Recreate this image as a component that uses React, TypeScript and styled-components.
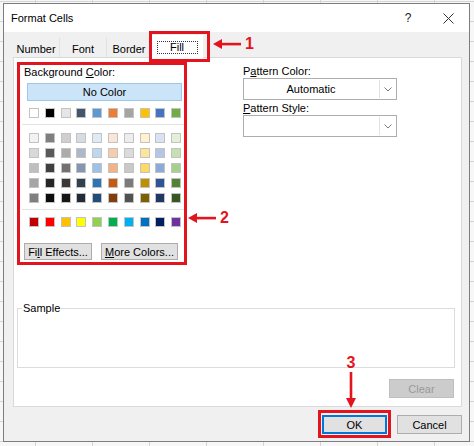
import React from 'react'
import styled, { createGlobalStyle } from 'styled-components'

const RED = '#e2141d'

const GlobalStyle = createGlobalStyle`
  html, body {
    margin: 0;
    padding: 0;
  }
  body {
    font-family: "Liberation Sans", Arial, sans-serif;
    font-size: 10.5px;
    color: #000000;
  }
`

const THEME = ['#FFFFFF', '#000000', '#E7E6E6', '#44546A', '#5B9BD5', '#ED7D31', '#A5A5A5', '#FFC000', '#4472C4', '#70AD47']

const TINTS = [
  ['#F2F2F2', '#7F7F7F', '#D0CECE', '#D6DCE4', '#DEEBF6', '#FBE5D5', '#EDEDED', '#FFF2CC', '#D9E2F3', '#E2EFD9'],
  ['#D8D8D8', '#595959', '#AEABAB', '#ADB9CA', '#BDD7EE', '#F7CBAC', '#DBDBDB', '#FEE599', '#B4C6E7', '#C5E0B3'],
  ['#BFBFBF', '#3F3F3F', '#757070', '#8496B0', '#9CC3E5', '#F4B183', '#C9C9C9', '#FFD965', '#8EAADB', '#A8D08D'],
  ['#A5A5A5', '#262626', '#3A3838', '#323F4F', '#2E75B5', '#C55A11', '#7B7B7B', '#BF9000', '#2F5496', '#538135'],
  ['#7F7F7F', '#0C0C0C', '#171616', '#222A35', '#1E4E79', '#833C0B', '#525252', '#7F6000', '#1F3864', '#375623'],
]

const STANDARD = ['#C00000', '#FF0000', '#FFC000', '#FFFF00', '#92D050', '#00B050', '#00B0F0', '#0070C0', '#002060', '#7030A0']

const Screen = styled.div`
  width: 474px;
  height: 446px;
  box-sizing: border-box;
  padding: 3px 4px 4px 3px;
  background-color: #f7f7f7;
  background-image: linear-gradient(#d4d4d4 1px, transparent 1px),
    linear-gradient(90deg, #d4d4d4 1px, transparent 1px);
  background-size: 57px 20px;
  background-position: 35px 1px;
  overflow: hidden;
`

const Dialog = styled.div`
  position: relative;
  width: 467px;
  height: 439px;
  box-sizing: border-box;
  border: 1px solid #7d7d7d;
  background: #f0f0f0;
  display: flex;
  flex-direction: column;
`

const TitleBar = styled.div`
  height: 28px;
  background: #ffffff;
  display: flex;
  align-items: center;
  padding: 0 6px 0 7px;
  font-size: 11px;
`

const Title = styled.div`
  flex: 1;
`

const Controls = styled.div`
  display: flex;
  gap: 10px;
`

const ControlButton = styled.div`
  width: 30px;
  height: 28px;
  display: flex;
  align-items: center;
  justify-content: center;
  font-size: 12px;
  color: #222;
`

const Body = styled.div`
  flex: 1;
  display: flex;
  flex-direction: column;
  padding: 0 7px 0 9px;
`

const TabStrip = styled.div`
  height: 25px;
  display: flex;
  align-items: flex-end;
`

const Tab = styled.div<{ $w: number; $active?: boolean }>`
  position: relative;
  width: ${({ $w }) => $w}px;
  height: ${({ $active }) => ($active ? 23 : 20)}px;
  margin-bottom: ${({ $active }) => ($active ? -1 : 0)}px;
  box-sizing: border-box;
  display: flex;
  align-items: center;
  justify-content: center;
  padding-top: ${({ $active }) => ($active ? 1 : 3)}px;
  background: ${({ $active }) => ($active ? '#ffffff' : '#f0f0f0')};
  border-right: 1px solid ${({ $active }) => ($active ? 'transparent' : '#e2e2e2')};
  z-index: ${({ $active }) => ($active ? 1 : 0)};
  font-size: 11px;

  ${({ $active }) =>
    $active &&
    `
    &::after {
      content: '';
      position: absolute;
      inset: -4px -8px -4px -3px;
      border: 3px solid ${RED};
    }
  `}
`

const FocusLabel = styled.span`
  width: 41px;
  height: 13px;
  box-sizing: border-box;
  border: 1px dotted #333;
  display: flex;
  align-items: center;
  justify-content: center;
`

const Panel = styled.div`
  height: 350px;
  box-sizing: border-box;
  background: #ffffff;
  border: 1px solid #d9d9d9;
  padding: 4px 6px 0 3px;
  display: flex;
  flex-direction: column;
`

const TopRow = styled.div`
  display: flex;
`

const ColorGroup = styled.div<{ $highlight?: boolean }>`
  width: 170px;
  height: 203px;
  box-sizing: border-box;
  border: 3px solid ${({ $highlight }) => ($highlight ? RED : 'transparent')};
  padding: 1px 2px 0 4px;
  display: flex;
  flex-direction: column;
`

const Label = styled.div`
  height: 13px;
  line-height: 13px;
  font-size: 11px;
  white-space: nowrap;
`

const Key = styled.span`
  text-decoration: underline;
  text-underline-offset: 1px;
`

const NoColorButton = styled.div`
  margin: 4px 0 0 3px;
  width: 155px;
  height: 18px;
  box-sizing: border-box;
  background: #cce4f7;
  border: 1px solid #9cc8eb;
  display: flex;
  align-items: center;
  justify-content: center;
  font-size: 11px;
`

const SwatchGrid = styled.div<{ $top: number }>`
  margin: ${({ $top }) => $top}px 0 0 5px;
  display: grid;
  grid-template-columns: repeat(10, 10px);
  column-gap: 5.8px;
  row-gap: 5px;
`

const Swatch = styled.div<{ $color: string }>`
  width: 10px;
  height: 10px;
  box-sizing: border-box;
  background: ${({ $color }) => $color};
  border: 1px solid #c3c3c3;
`

const Divider = styled.div<{ $top: number }>`
  margin: ${({ $top }) => $top}px -2px 0 -2px;
  height: 1px;
  background: #e3e3e3;
`

const ButtonRow = styled.div`
  margin-top: 16px;
  display: flex;
  gap: 9px;
`

const Button = styled.div<{ $w: number; $h?: number; $primary?: boolean; $disabled?: boolean; $highlight?: boolean }>`
  position: relative;
  width: ${({ $w }) => $w}px;
  height: ${({ $h }) => $h ?? 17}px;
  box-sizing: border-box;
  display: flex;
  align-items: center;
  justify-content: center;
  background: ${({ $disabled }) => ($disabled ? '#cccccc' : '#e1e1e1')};
  border: 1px solid ${({ $primary, $disabled }) => ($primary ? '#0078d7' : $disabled ? '#bfbfbf' : '#adadad')};
  box-shadow: ${({ $primary }) => ($primary ? 'inset 0 0 0 1px #0078d7' : 'none')};
  color: ${({ $disabled }) => ($disabled ? '#9a9a9a' : '#000000')};
  font-size: 11px;

  ${({ $highlight }) =>
    $highlight &&
    `
    &::after {
      content: '';
      position: absolute;
      inset: -6px -5px -5px -5px;
      border: 3px solid ${RED};
    }
  `}
`

const PatternColumn = styled.div`
  margin-left: 56px;
  width: 154px;
  padding-top: 3px;
  display: flex;
  flex-direction: column;
`

const Select = styled.div`
  height: 22px;
  box-sizing: border-box;
  border: 1px solid #adadad;
  background: #ffffff;
  display: flex;
`

const SelectValue = styled.div`
  flex: 1;
  display: flex;
  align-items: center;
  justify-content: center;
  font-size: 11px;
`

const Chevron = styled.div`
  width: 16px;
  margin: 1px;
  box-sizing: border-box;
  border-left: 1px solid #e1e1e1;
  display: flex;
  align-items: center;
  justify-content: center;
`

const LabelGap = styled.div`
  height: 2px;
`

const Sample = styled.fieldset`
  margin: 37px 0 0 0;
  height: 66px;
  box-sizing: border-box;
  padding: 0 0 0 4px;
  border: 1px solid #dcdcdc;
`

const Legend = styled.legend`
  padding: 0 1px;
  font-size: 11px;
  line-height: 13px;
`

const ClearRow = styled.div`
  margin-top: 11px;
  display: flex;
  justify-content: flex-end;
  padding-right: 1px;
`

const Footer = styled.div`
  margin-top: 8px;
  display: flex;
  justify-content: flex-end;
  gap: 10px;
`

const Callout = styled.div<{ $left: number; $top: number; $column?: boolean }>`
  position: absolute;
  left: ${({ $left }) => $left}px;
  top: ${({ $top }) => $top}px;
  display: flex;
  flex-direction: ${({ $column }) => ($column ? 'column' : 'row')};
  align-items: center;
  gap: ${({ $column }) => ($column ? 1 : 4)}px;
`

const CalloutNumber = styled.span`
  font-family: "Liberation Sans", Arial, sans-serif;
  font-weight: bold;
  font-size: 16px;
  line-height: 16px;
  color: ${RED};
`

const LeftArrow = () => (
  <svg width="28" height="12" viewBox="0 0 28 12">
    <polygon points="0,6 9,1 9,11" fill={RED} />
    <rect x="8" y="4.8" width="20" height="2.6" fill={RED} />
  </svg>
)

const DownArrow = () => (
  <svg width="12" height="36" viewBox="0 0 12 36">
    <rect x="4.7" y="0" width="2.6" height="28" fill={RED} />
    <polygon points="6,36 1,26 11,26" fill={RED} />
  </svg>
)

const CloseIcon = () => (
  <svg width="11" height="11" viewBox="0 0 11 11">
    <path d="M0.5 0.5 L10.5 10.5 M10.5 0.5 L0.5 10.5" stroke="#333" strokeWidth="1" fill="none" />
  </svg>
)

const ChevronIcon = () => (
  <svg width="8" height="5" viewBox="0 0 8 5">
    <path d="M0.5 0.5 L4 4 L7.5 0.5" stroke="#7a7a7a" strokeWidth="1" fill="none" />
  </svg>
)

const App: React.FC = () => {
  return (
    <>
      <GlobalStyle />
      <Screen>
        <Dialog>
          <TitleBar>
            <Title>Format Cells</Title>
            <Controls>
              <ControlButton>?</ControlButton>
              <ControlButton>
                <CloseIcon />
              </ControlButton>
            </Controls>
          </TitleBar>

          <Body>
            <TabStrip>
              <Tab $w={47}>Number</Tab>
              <Tab $w={47}>Font</Tab>
              <Tab $w={45}>Border</Tab>
              <Tab $w={51} $active>
                <FocusLabel>Fill</FocusLabel>
              </Tab>
            </TabStrip>

            <Panel>
              <TopRow>
                <ColorGroup $highlight>
                  <Label>
                    Background <Key>C</Key>olor:
                  </Label>
                  <NoColorButton>No Color</NoColorButton>
                  <SwatchGrid $top={7}>
                    {THEME.map((c) => (
                      <Swatch key={c} $color={c} />
                    ))}
                  </SwatchGrid>
                  <Divider $top={6} />
                  <SwatchGrid $top={8}>
                    {TINTS.flat().map((c, i) => (
                      <Swatch key={i} $color={c} />
                    ))}
                  </SwatchGrid>
                  <Divider $top={6} />
                  <SwatchGrid $top={7}>
                    {STANDARD.map((c, i) => (
                      <Swatch key={i} $color={c} />
                    ))}
                  </SwatchGrid>
                  <ButtonRow>
                    <Button $w={68}>
                      <span>
                        Fi<Key>l</Key>l Effects...
                      </span>
                    </Button>
                    <Button $w={77}>
                      <span>
                        <Key>M</Key>ore Colors...
                      </span>
                    </Button>
                  </ButtonRow>
                </ColorGroup>

                <PatternColumn>
                  <Label>
                    P<Key>a</Key>ttern Color:
                  </Label>
                  <Select>
                    <SelectValue>Automatic</SelectValue>
                    <Chevron>
                      <ChevronIcon />
                    </Chevron>
                  </Select>
                  <LabelGap />
                  <Label>
                    <Key>P</Key>attern Style:
                  </Label>
                  <Select>
                    <SelectValue />
                    <Chevron>
                      <ChevronIcon />
                    </Chevron>
                  </Select>
                </PatternColumn>
              </TopRow>

              <Sample>
                <Legend>Sample</Legend>
              </Sample>

              <ClearRow>
                <Button $w={65} $h={19} $disabled>
                  Clear
                </Button>
              </ClearRow>
            </Panel>

            <Footer>
              <Button $w={65} $h={19} $primary $highlight>
                OK
              </Button>
              <Button $w={65} $h={19}>
                Cancel
              </Button>
            </Footer>
          </Body>

          <Callout $left={209} $top={32}>
            <LeftArrow />
            <CalloutNumber>1</CalloutNumber>
          </Callout>
          <Callout $left={184} $top={206}>
            <LeftArrow />
            <CalloutNumber>2</CalloutNumber>
          </Callout>
          <Callout $left={341} $top={351} $column>
            <CalloutNumber>3</CalloutNumber>
            <DownArrow />
          </Callout>
        </Dialog>
      </Screen>
    </>
  )
}

export default App
